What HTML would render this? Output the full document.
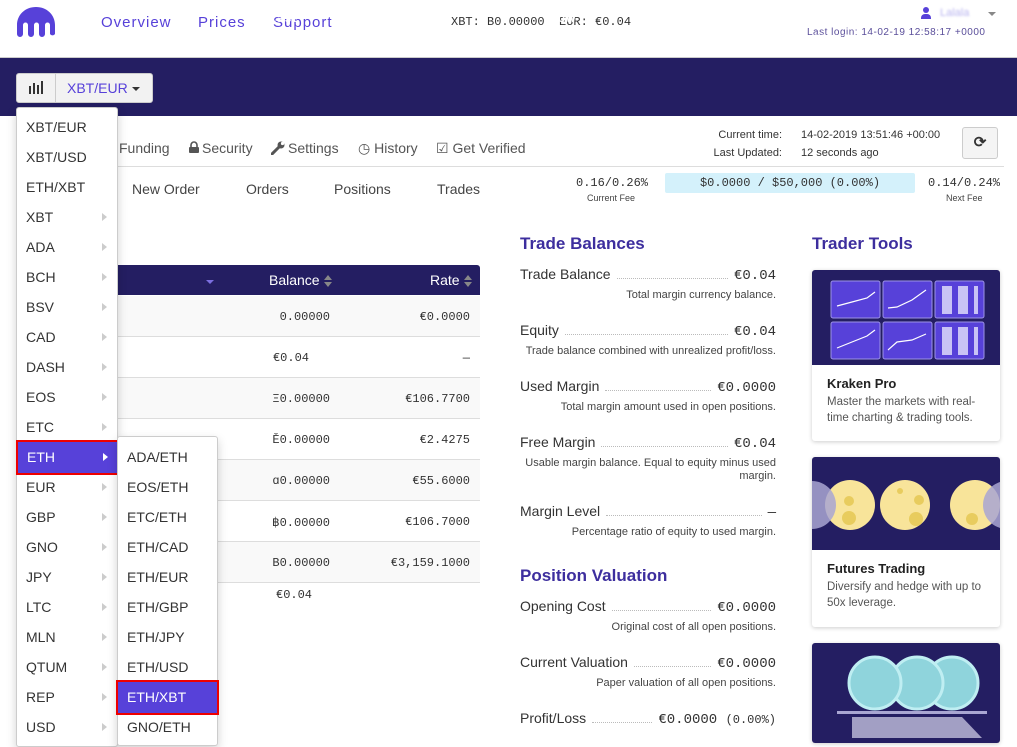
<!DOCTYPE html>
<html><head><meta charset="utf-8"><style>
*{box-sizing:border-box;margin:0;padding:0}
body{width:1017px;height:732px;overflow:hidden;position:relative;background:#fff;font-family:"Liberation Sans",sans-serif;color:#333}
.a{position:absolute;white-space:nowrap}
.mono{font-family:"Liberation Mono",monospace}
.nav{color:#5741d9;font-size:15px;letter-spacing:1px;top:14px}
.bar{position:absolute;left:0;top:58px;width:1017px;height:58px;background:#241e62}
.st{color:#fff;text-align:center;width:140px}
.st b{display:block;font-size:12px;letter-spacing:1px;margin-top:11px}
.st span{display:block;font-family:"Liberation Mono",monospace;font-size:13px;margin-top:7px}
.menu{position:absolute;background:#fff;border:1px solid #ccc;border-radius:3px;box-shadow:0 4px 10px rgba(0,0,0,.18)}
.it{position:absolute;left:0;width:100%;height:30px;line-height:30px;padding-left:9px;font-size:14px;color:#333}
.it i{position:absolute;right:10px;top:11px;border-left:5px solid #ccc;border-top:4px solid transparent;border-bottom:4px solid transparent}
.hl{background:#5741d9;color:#fff;outline:2px solid #e00;}
.hl i{border-left-color:#fff}
.tab{font-size:14px;color:#444;top:181px}
.row{position:absolute;left:117px;width:363px;height:41px;border-bottom:1px solid #ddd;font-family:"Liberation Mono",monospace;font-size:12px;color:#333}
.row:nth-child(odd){background:#f9f9f9}
.h2{font-size:17px;font-weight:bold;color:#3d2e9e}
.ln{position:absolute;left:520px;width:256px;font-size:14px;display:flex;align-items:baseline}
.ln .d{flex:1;border-bottom:1px dotted #bbb;margin:0 6px;height:1px}
.ln .v{font-family:"Liberation Mono",monospace;font-size:14px}
.sub{position:absolute;right:241px;font-size:11px;color:#444;text-align:right;width:256px;line-height:13px}
.card{position:absolute;left:812px;width:188px;background:#fff;border-radius:3px;box-shadow:0 1px 4px rgba(0,0,0,.2);overflow:hidden}
.card .img{background:#241e62;position:relative}
.card b{display:block;font-size:13px;color:#222;margin:11px 0 0 15px}
.card p{font-size:11.5px;color:#555;margin:3px 10px 0 15px;line-height:16px}
.sort{display:inline-block;vertical-align:middle;margin-left:4px;width:8px;height:12px;position:relative}
.sort:before{content:"";position:absolute;left:0;top:0;border-bottom:5px solid #888;border-left:4px solid transparent;border-right:4px solid transparent}
.sort:after{content:"";position:absolute;left:0;top:7px;border-top:5px solid #888;border-left:4px solid transparent;border-right:4px solid transparent}
</style></head><body>
<!-- header -->
<svg class="a" style="left:17px;top:7px" width="38" height="30" viewBox="0 0 38 30"><path d="M19 0C8 0 0 8 0 18v9a3 3 0 0 0 6 0v-9a2.5 2.5 0 0 1 5 0v9a3 3 0 0 0 6 0v-9a2.5 2.5 0 0 1 5 0v9a3 3 0 0 0 6 0v-9a2.5 2.5 0 0 1 5 0v9a3 3 0 0 0 5 0v-9C38 8 30 0 19 0z" fill="#5741d9"/></svg>
<div class="a nav" style="left:101px">Overview</div>
<div class="a nav" style="left:198px">Prices</div>
<div class="a nav" style="left:273px">Support</div>
<div class="a mono" style="left:451px;top:15px;font-size:12px;color:#333">XBT: B0.00000&nbsp;&nbsp;EUR: €0.04</div>
<div class="a" style="left:921px;top:7px;width:10px;height:12px"><div style="width:6px;height:6px;border-radius:3px;background:#5741d9;margin-left:2px"></div><div style="width:10px;height:5px;border-radius:4px 4px 0 0;background:#5741d9;margin-top:1px"></div></div>
<div class="a" style="left:940px;top:7px;font-size:11px;color:#b8b4ef;filter:blur(1px)">Lalala</div>
<div class="a" style="left:988px;top:12px;border-top:4px solid #888;border-left:4px solid transparent;border-right:4px solid transparent"></div>
<div class="a" style="left:807px;top:27px;font-size:10px;color:#5a4e9a;letter-spacing:.5px">Last login: 14-02-19 12:58:17 +0000</div>
<div class="a" style="left:0;top:57px;width:1017px;height:1px;background:#ccc"></div>
<div class="bar"></div>
<div class="a" style="left:16px;top:73px;width:137px;height:30px;background:#f2f2f2;border:1px solid #ccc;border-radius:3px"></div>
<div class="a" style="left:55px;top:73px;width:1px;height:30px;background:#ccc"></div>
<svg class="a" style="left:29px;top:81px" width="14" height="13"><rect x="0" y="5" width="2" height="8" fill="#333"/><rect x="4" y="2" width="2" height="11" fill="#333"/><rect x="8" y="4" width="2" height="9" fill="#333"/><rect x="12" y="0" width="2" height="13" fill="#333"/></svg>
<div class="a" style="left:67px;top:80px;font-size:14px;color:#5741d9">XBT/EUR</div>
<div class="a" style="left:132px;top:87px;border-top:4px solid #333;border-left:4px solid transparent;border-right:4px solid transparent"></div>
<div class="a st" style="left:213px"><b>Last</b><span>€3,159.2</span></div>
<div class="a st" style="left:353px"><b>High</b><span>€3,187.2</span></div>
<div class="a st" style="left:493px"><b>Low</b><span>€3,150.0</span></div>
<div class="a st" style="left:633px"><b>24 Hour Volume</b><span>3,263.27</span></div>
<div class="a st" style="left:773px"><b>Weighted Avg</b><span>€3,170.6</span></div>
<!-- subnav -->
<div class="a" style="left:119px;top:140px;font-size:14px;color:#555">Funding</div>
<svg class="a" style="left:189px;top:141px" width="10" height="12"><path d="M2 6V4a3 3 0 0 1 6 0v2" stroke="#555" stroke-width="1.6" fill="none"/><rect x="0" y="6" width="10" height="6" rx="1" fill="#555"/></svg>
<div class="a" style="left:202px;top:140px;font-size:14px;color:#555">Security</div>
<svg class="a" style="left:271px;top:141px" width="14" height="14"><path d="M1 13 L8 6" stroke="#555" stroke-width="3" stroke-linecap="round"/><circle cx="10" cy="4" r="3.5" fill="#555"/><circle cx="11.5" cy="2.5" r="1.6" fill="#fff"/></svg>
<div class="a" style="left:288px;top:140px;font-size:14px;color:#555">Settings</div>
<div class="a" style="left:358px;top:140px;font-size:14px;color:#555">◷ History</div>
<div class="a" style="left:436px;top:140px;font-size:14px;color:#555">☑ Get Verified</div>
<div class="a" style="left:700px;top:126px;font-size:11px;color:#333;width:82px;text-align:right;line-height:18px">Current time:<br>Last Updated:</div>
<div class="a" style="left:801px;top:126px;font-size:11px;color:#333;line-height:18px">14-02-2019 13:51:46 +00:00<br>12 seconds ago</div>
<div class="a" style="left:962px;top:127px;width:36px;height:32px;background:#f4f4f4;border:1px solid #ccc;border-radius:3px;text-align:center;line-height:30px;font-size:15px;font-weight:bold;color:#333">⟳</div>
<div class="a" style="left:117px;top:166px;width:887px;height:1px;background:#ddd"></div>
<div class="a tab" style="left:132px">New Order</div>
<div class="a tab" style="left:246px">Orders</div>
<div class="a tab" style="left:334px">Positions</div>
<div class="a tab" style="left:437px">Trades</div>
<div class="a mono" style="left:576px;top:176px;font-size:12px;color:#333">0.16/0.26%</div>
<div class="a" style="left:587px;top:193px;font-size:9px;color:#444">Current Fee</div>
<div class="a mono" style="left:665px;top:173px;width:250px;height:20px;background:#d4f1fb;border-radius:2px;font-size:12px;text-align:center;line-height:20px;color:#333">$0.0000 / $50,000 (0.00%)</div>
<div class="a mono" style="left:928px;top:176px;font-size:12px;color:#333">0.14/0.24%</div>
<div class="a" style="left:946px;top:193px;font-size:9px;color:#444">Next Fee</div>
<!-- table -->
<div class="a" style="left:117px;top:265px;width:363px;height:30px;background:#241e62;border-radius:0 3px 0 0"></div>
<div class="a" style="left:206px;top:280px;border-top:4px solid #7b6ee0;border-left:4px solid transparent;border-right:4px solid transparent"></div>
<div class="a" style="left:269px;top:272px;font-size:14px;color:#fff">Balance<span class="sort"></span></div>
<div class="a" style="left:430px;top:272px;font-size:14px;color:#fff">Rate<span class="sort"></span></div>
<div>
<div class="row" style="top:296px"><span class="a" style="right:150px;top:14px">0.00000</span><span class="a" style="right:10px;top:14px">€0.0000</span></div>
<div class="row" style="top:337px"><span class="a" style="right:171px;top:14px">€0.04</span><span class="a" style="right:10px;top:14px">—</span></div>
<div class="row" style="top:378px"><span class="a" style="right:150px;top:14px">Ξ0.00000</span><span class="a" style="right:10px;top:14px">€106.7700</span></div>
<div class="row" style="top:419px"><span class="a" style="right:150px;top:14px">Ě0.00000</span><span class="a" style="right:10px;top:14px">€2.4275</span></div>
<div class="row" style="top:460px"><span class="a" style="right:150px;top:14px">ɑ0.00000</span><span class="a" style="right:10px;top:14px">€55.6000</span></div>
<div class="row" style="top:501px"><span class="a" style="right:150px;top:14px">฿0.00000</span><span class="a" style="right:10px;top:14px">€106.7000</span></div>
<div class="row" style="top:542px"><span class="a" style="right:150px;top:14px">B0.00000</span><span class="a" style="right:10px;top:14px">€3,159.1000</span></div>
</div>
<div class="a mono" style="left:276px;top:588px;font-size:12px">€0.04</div>
<!-- dropdown -->
<div class="menu" style="left:16px;top:107px;width:102px;height:640px">
<div class="it" style="top:4px">XBT/EUR</div><div class="it" style="top:34px">XBT/USD</div><div class="it" style="top:64px">ETH/XBT</div>
<div class="it" style="top:94px">XBT<i></i></div><div class="it" style="top:124px">ADA<i></i></div><div class="it" style="top:154px">BCH<i></i></div>
<div class="it" style="top:184px">BSV<i></i></div><div class="it" style="top:214px">CAD<i></i></div><div class="it" style="top:244px">DASH<i></i></div>
<div class="it" style="top:274px">EOS<i></i></div><div class="it" style="top:304px">ETC<i></i></div>
<div class="it hl" style="top:334px;left:1px;width:100px;height:31px;line-height:31px">ETH<i></i></div>
<div class="it" style="top:364px">EUR<i></i></div><div class="it" style="top:394px">GBP<i></i></div><div class="it" style="top:424px">GNO<i></i></div>
<div class="it" style="top:454px">JPY<i></i></div><div class="it" style="top:484px">LTC<i></i></div><div class="it" style="top:514px">MLN<i></i></div>
<div class="it" style="top:544px">QTUM<i></i></div><div class="it" style="top:574px">REP<i></i></div><div class="it" style="top:604px">USD<i></i></div>
</div>
<div class="menu" style="left:117px;top:436px;width:101px;height:310px">
<div class="it" style="top:5px">ADA/ETH</div><div class="it" style="top:35px">EOS/ETH</div><div class="it" style="top:65px">ETC/ETH</div>
<div class="it" style="top:95px">ETH/CAD</div><div class="it" style="top:125px">ETH/EUR</div><div class="it" style="top:155px">ETH/GBP</div>
<div class="it" style="top:185px">ETH/JPY</div><div class="it" style="top:215px">ETH/USD</div>
<div class="it hl" style="top:245px;height:31px;line-height:31px">ETH/XBT</div>
<div class="it" style="top:275px">GNO/ETH</div>
</div>
<!-- balances -->
<div class="a h2" style="left:520px;top:234px">Trade Balances</div>
<div class="ln" style="top:266px">Trade Balance<span class="d"></span><span class="v">€0.04</span></div>
<div class="sub" style="top:289px">Total margin currency balance.</div>
<div class="ln" style="top:322px">Equity<span class="d"></span><span class="v">€0.04</span></div>
<div class="sub" style="top:345px">Trade balance combined with unrealized profit/loss.</div>
<div class="ln" style="top:378px">Used Margin<span class="d"></span><span class="v">€0.0000</span></div>
<div class="sub" style="top:401px">Total margin amount used in open positions.</div>
<div class="ln" style="top:434px">Free Margin<span class="d"></span><span class="v">€0.04</span></div>
<div class="sub" style="top:457px">Usable margin balance. Equal to equity minus used margin.</div>
<div class="ln" style="top:503px">Margin Level<span class="d"></span><span class="v">—</span></div>
<div class="sub" style="top:526px">Percentage ratio of equity to used margin.</div>
<div class="a h2" style="left:520px;top:566px">Position Valuation</div>
<div class="ln" style="top:598px">Opening Cost<span class="d"></span><span class="v">€0.0000</span></div>
<div class="sub" style="top:621px">Original cost of all open positions.</div>
<div class="ln" style="top:654px">Current Valuation<span class="d"></span><span class="v">€0.0000</span></div>
<div class="sub" style="top:677px">Paper valuation of all open positions.</div>
<div class="ln" style="top:710px">Profit/Loss<span class="d"></span><span class="v">€0.0000 <span style="font-size:12px">(0.00%)</span></span></div>
<!-- trader tools -->
<div class="a h2" style="left:812px;top:234px">Trader Tools</div>
<div class="card" style="top:270px;height:171px"><div class="img" style="height:95px">
<svg width="188" height="95"><g fill="#5741d9" stroke="#9d93e8" stroke-width="1">
<rect x="19" y="11" width="49" height="37" rx="2"/><rect x="71" y="11" width="49" height="37" rx="2"/><rect x="123" y="11" width="49" height="37" rx="2"/>
<rect x="19" y="52" width="49" height="37" rx="2"/><rect x="71" y="52" width="49" height="37" rx="2"/><rect x="123" y="52" width="49" height="37" rx="2"/></g>
<g stroke="#fff" fill="none" stroke-width="1.2"><path d="M25 36 L40 32 L55 28 L63 22"/><path d="M76 38 L85 37 L100 30 L114 20"/><path d="M25 78 L40 72 L55 66 L63 60"/><path d="M76 80 L85 72 L100 70 L114 64"/></g>
<g fill="#c9c3f5"><rect x="130" y="16" width="10" height="28"/><rect x="146" y="16" width="10" height="28"/><rect x="162" y="16" width="4" height="28"/><rect x="130" y="57" width="10" height="28"/><rect x="146" y="57" width="10" height="28"/><rect x="162" y="57" width="4" height="28"/></g></svg></div>
<b>Kraken Pro</b><p>Master the markets with real-time charting &amp; trading tools.</p></div>
<div class="card" style="top:457px;height:170px"><div class="img" style="height:93px">
<svg width="188" height="93"><g fill="#f8e49a"><circle cx="38" cy="48" r="25"/><circle cx="93" cy="48" r="25"/><circle cx="163" cy="48" r="25"/></g>
<g fill="#e8cc5e"><circle cx="37" cy="61" r="7"/><circle cx="37" cy="44" r="5"/><circle cx="104" cy="62" r="7"/><circle cx="107" cy="43" r="5"/><circle cx="88" cy="34" r="3"/><circle cx="160" cy="62" r="6"/></g>
<circle cx="0" cy="48" r="24" fill="#a9a6d2" opacity=".85"/><circle cx="195" cy="48" r="24" fill="#a9a6d2" opacity=".85"/></svg></div>
<b>Futures Trading</b><p>Diversify and hedge with up to 50x leverage.</p></div>
<div class="card" style="top:643px;height:100px"><div class="img" style="height:100px">
<svg width="188" height="100"><g fill="#8fd4dc" stroke="#bfeef2" stroke-width="3"><circle cx="140" cy="40" r="26"/><circle cx="105" cy="40" r="26"/><circle cx="63" cy="40" r="26"/></g>
<rect x="25" y="68" width="150" height="3" fill="#a9a6d2"/><path d="M40 74 L150 74 L170 95 L40 95Z" fill="#d8d6ee" opacity=".7"/></svg></div></div>
</body></html>
